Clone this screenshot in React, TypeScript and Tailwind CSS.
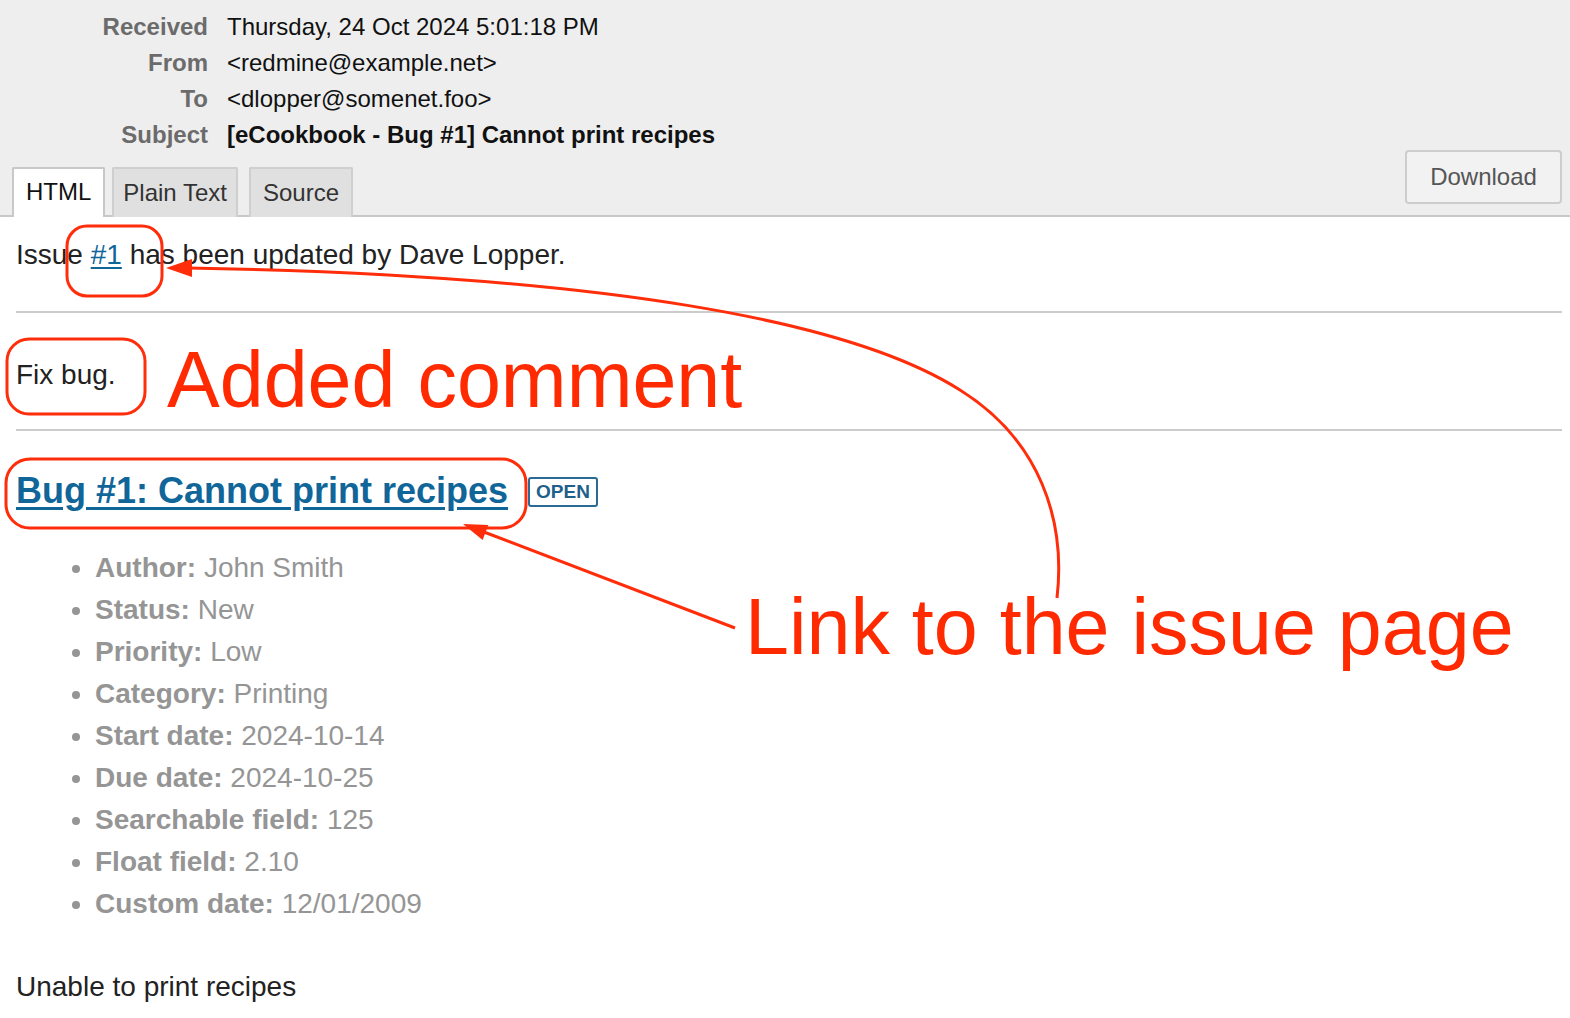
import { Fragment } from "react";

const headers: [string, string, boolean?][] = [
  ["Received", "Thursday, 24 Oct 2024 5:01:18 PM"],
  ["From", "<redmine@example.net>"],
  ["To", "<dlopper@somenet.foo>"],
  ["Subject", "[eCookbook - Bug #1] Cannot print recipes", true],
];

const details: [string, string][] = [
  ["Author", "John Smith"],
  ["Status", "New"],
  ["Priority", "Low"],
  ["Category", "Printing"],
  ["Start date", "2024-10-14"],
  ["Due date", "2024-10-25"],
  ["Searchable field", "125"],
  ["Float field", "2.10"],
  ["Custom date", "12/01/2009"],
];

const RED = "#ff2d0a";

export default function App() {
  return (
    <div className="relative min-h-[1018px] w-[1570px] overflow-hidden bg-white font-['Liberation_Sans',Arial,sans-serif] text-[#111]">
      {/* mail header */}
      <header className="border-b-2 border-[#c8c8c8] bg-[#eeeeee] pt-[9px]">
        <div className="grid grid-cols-[208px_1fr] gap-x-[19px] text-[24px] leading-[36px]">
          {headers.map(([label, value, bold]) => (
            <Fragment key={label}>
              <div className="text-right font-bold text-[#6b6b6b]">{label}</div>
              <div className={bold ? "font-bold text-[#111]" : "text-[#111]"}>{value}</div>
            </Fragment>
          ))}
        </div>
        <div className="-mt-[3px] flex items-end justify-between pl-3 pr-[8px]">
          <nav className="-mb-[2px] flex items-end">
            <span className="rounded-t-[2px] border-2 border-b-0 border-[#c8c8c8] bg-white px-[12px] pb-[10px] pt-[7px] text-[24px] leading-[31px] text-[#111]">
              HTML
            </span>
            <span className="ml-[7px] rounded-t-[2px] border-2 border-b-0 border-[#cfcfcf] bg-[#e0e0e0] px-[9px] pb-[9px] pt-[8px] text-[24px] leading-[31px] text-[#333]">
              Plain Text
            </span>
            <span className="ml-[11px] rounded-t-[2px] border-2 border-b-0 border-[#cfcfcf] bg-[#e0e0e0] px-[12px] pb-[9px] pt-[8px] text-[24px] leading-[31px] text-[#333]">
              Source
            </span>
          </nav>
          <button className="mb-[11px] h-[54px] w-[157px] rounded-[4px] border-2 border-[#cdcdcd] bg-[#f2f2f2] text-[24px] text-[#555]">
            Download
          </button>
        </div>
      </header>

      {/* mail body */}
      <main className="pl-4 pr-2 text-[28px] text-[#222]">
        <p className="mt-[17px] leading-[42px]">
          Issue <a className="text-[#169] underline underline-offset-[3px]">#1</a> has been updated by Dave Lopper.
        </p>
        <hr className="mt-[35px] h-[2px] border-0 bg-[#cccccc]" />
        <p className="mt-[41px] leading-[42px]">Fix bug.</p>
        <hr className="mt-[33px] h-[2px] border-0 bg-[#cccccc]" />
        <h1 className="mt-[38px] flex items-center text-[36px] font-bold leading-[44px]">
          <a className="text-[#169] underline underline-offset-[4px]">Bug #1: Cannot print recipes</a>
          <span className="ml-5 mt-[2px] rounded-[3px] border-2 border-[#2a6b96] px-[6px] text-[19px] leading-[26px] text-[#1f5f8b]">
            OPEN
          </span>
        </h1>
        <ul className="mt-[34px] list-disc pl-[79px] text-[#959595] marker:text-[#959595]">
          {details.map(([k, v]) => (
            <li key={k} className="leading-[42px]">
              <strong className="font-bold">{k}:</strong> {v}
            </li>
          ))}
        </ul>
        <p className="mt-[41px] leading-[42px]">Unable to print recipes</p>
      </main>

      {/* annotations */}
      <svg className="pointer-events-none absolute inset-0" width="1570" height="1018" viewBox="0 0 1570 1018">
        <g fill="none" stroke={RED} strokeWidth="3">
          <rect x="67" y="226" width="95" height="70" rx="20" />
          <rect x="7" y="339" width="138" height="75" rx="22" />
          <rect x="6" y="459" width="520" height="69" rx="24" />
          <path d="M1057 598 C1066 520 1040 440 960 390 C850 320 600 275 188 268" />
          <path d="M735 628 L484 532" />
        </g>
        <g fill={RED}>
          <polygon points="166,268 192,259 192,277" />
          <polygon points="463,524 482.6,540.1 488.3,525.1" />
        </g>
      </svg>
      <div className="pointer-events-none absolute left-[167px] top-[340px] whitespace-nowrap text-[79px] leading-[80px] text-[#ff2a00]">
        Added comment
      </div>
      <div className="pointer-events-none absolute left-[745px] top-[587px] whitespace-nowrap text-[79px] leading-[80px] text-[#ff2a00]">
        Link to the issue page
      </div>
    </div>
  );
}
